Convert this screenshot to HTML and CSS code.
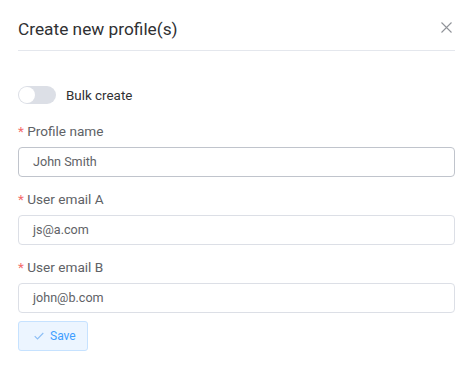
FILE: index.html
```html
<!DOCTYPE html>
<html>
<head>
<meta charset="utf-8">
<link rel="stylesheet" href="styles.css">
</head>
<body>
<div class="dialog">
  <div class="header">
    <div class="title">Create new profile(s)</div>
    <svg class="close" width="11" height="11" viewBox="0 0 11 11"><path d="M0.5 0.5L10.5 10.5M10.5 0.5L0.5 10.5" stroke="#909399" stroke-width="1.1" fill="none"/></svg>
  </div>
  <div class="body">
    <div class="switch-row">
      <span class="switch"><span class="knob"></span></span>
      <span class="switch-label">Bulk create</span>
    </div>
    <div class="field">
      <div class="label"><span class="req">*</span> Profile name</div>
      <div class="input focused">John Smith</div>
    </div>
    <div class="field">
      <div class="label"><span class="req">*</span> User email A</div>
      <div class="input">js@a.com</div>
    </div>
    <div class="field last">
      <div class="label"><span class="req">*</span> User email B</div>
      <div class="input">john@b.com</div>
    </div>
    <button class="save"><svg width="10" height="8" viewBox="0 0 10 8"><path d="M0.7 4.2L3.5 7L9.3 1" stroke="#8cbef5" stroke-width="1.1" fill="none"/></svg><span>Save</span></button>
  </div>
</div>
</body>
</html>
```
FILE: styles.css
```css
html, body {
  margin: 0;
  padding: 0;
  background: #ffffff;
}
body {
  font-family: Roboto, "Liberation Sans", Arial, sans-serif;
  color: #606266;
}
.dialog {
  width: 474px;
  height: 373px;
  padding: 0 19px 0 18px;
  box-sizing: border-box;
}
.header {
  display: flex;
  justify-content: space-between;
  align-items: center;
  height: 51px;
  border-bottom: 1px solid #e4e7ed;
  box-sizing: border-box;
  padding-top: 7px;
}
.title {
  font-size: 17.3px;
  line-height: 24px;
  color: #303133;
}
.close {
  margin-right: 3px;
  margin-top: -3px;
}
.body {
  padding-top: 35px;
}
.switch-row {
  display: flex;
  align-items: center;
  height: 18px;
  margin-bottom: 17px;
}
.switch {
  width: 38px;
  height: 18px;
  border-radius: 9px;
  background: #dcdfe6;
  position: relative;
  display: inline-block;
}
.knob {
  position: absolute;
  left: 1px;
  top: 1px;
  width: 16px;
  height: 16px;
  border-radius: 50%;
  background: #ffffff;
}
.switch-label {
  margin-left: 10px;
  font-size: 13.4px;
  color: #303133;
}
.field {
  margin-bottom: 12px;
}
.field.last {
  margin-bottom: 8px;
}
.label {
  font-size: 13.6px;
  line-height: 20px;
  margin-bottom: 6px;
  color: #606266;
}
.req {
  color: #f56c6c;
}
.input {
  height: 30px;
  box-sizing: border-box;
  border: 1px solid #dcdfe6;
  border-radius: 4px;
  padding: 0 14px;
  font-size: 12.6px;
  line-height: 28px;
  color: #606266;
}
.input.focused {
  border-color: #c0c4cc;
}
.save {
  display: flex;
  align-items: center;
  gap: 6px;
  width: 70px;
  height: 30px;
  box-sizing: border-box;
  padding: 0 0 0 15px;
  border: 1px solid #c6e2ff;
  border-radius: 3px;
  background: #ecf5ff;
  color: #409eff;
  font-family: Roboto, "Liberation Sans", Arial, sans-serif;
  font-size: 12px;
}
```
